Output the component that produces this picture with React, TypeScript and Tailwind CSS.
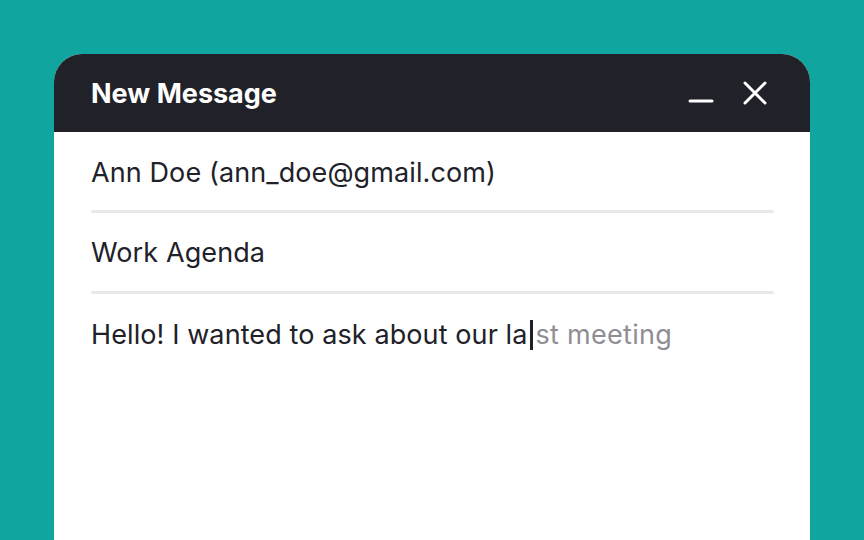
import React from "react";

export default function App() {
  return (
    <div
      className="w-[864px] h-[540px] overflow-hidden bg-[#10a59f] pt-[54px] pl-[54px]"
      style={{ fontFamily: "Inter, 'Noto Sans', sans-serif" }}
    >
      <div className="w-[756px] h-[520px] rounded-t-[28px] overflow-hidden bg-white">
        <div className="h-[78px] bg-[#212129] flex items-center justify-between pl-[37px] pr-[42px]">
          <span className="text-white text-[27px] font-bold pt-[3px]">New Message</span>
          <div className="flex items-center gap-[28px]">
            <svg width="26" height="26" viewBox="0 0 26 26" className="mt-[2px]">
              <line x1="2" y1="20" x2="24" y2="20" stroke="white" strokeWidth="3" strokeLinecap="round" />
            </svg>
            <svg width="26" height="26" viewBox="0 0 26 26">
              <path d="M3 3 L23 23 M23 3 L3 23" stroke="white" strokeWidth="3" strokeLinecap="round" />
            </svg>
          </div>
        </div>
        <div className="pl-[37px] pr-[36px] text-[27px] tracking-[0.1px] text-[#212129]">
          <div className="h-[78px] flex items-center pt-[4px]">Ann Doe (ann_doe@gmail.com)</div>
          <div className="h-[3px] rounded-full bg-[#e8e8e8]" />
          <div className="h-[78px] flex items-center pt-[3px]">Work Agenda</div>
          <div className="h-[3px] rounded-full bg-[#e8e8e8]" />
          <div className="h-[80px] flex items-center pt-[2px]">
            <span>Hello! I wanted to ask about our la</span>
            <span className="inline-block w-[3px] h-[30px] bg-[#212129] ml-[2px] mr-[3px]" />
            <span className="text-[#8e8e94] tracking-[0.3px]">st meeting</span>
          </div>
        </div>
      </div>
    </div>
  );
}
